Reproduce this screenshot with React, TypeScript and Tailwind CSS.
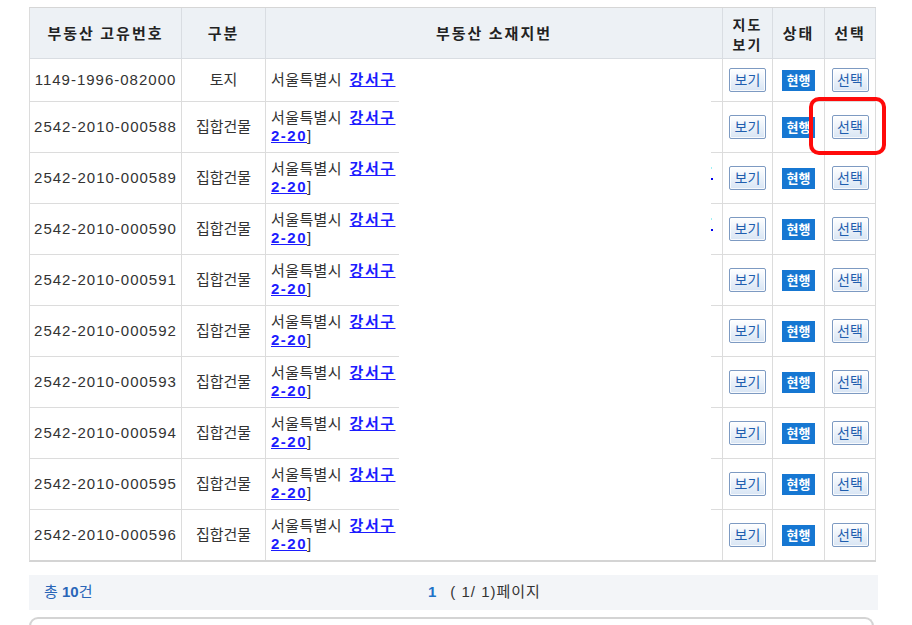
import React from 'react'

const rows = [
    { id: '1149-1996-082000', kind: '토지', single: true },
    { id: '2542-2010-000588', kind: '집합건물' },
    { id: '2542-2010-000589', kind: '집합건물', dots: true },
    { id: '2542-2010-000590', kind: '집합건물', dots: true },
    { id: '2542-2010-000591', kind: '집합건물' },
    { id: '2542-2010-000592', kind: '집합건물' },
    { id: '2542-2010-000593', kind: '집합건물' },
    { id: '2542-2010-000594', kind: '집합건물' },
    { id: '2542-2010-000595', kind: '집합건물' },
    { id: '2542-2010-000596', kind: '집합건물' },
]

const dotBg = 'bg-[radial-gradient(#dde2e8_0.6px,transparent_0.7px)] bg-[length:4px_4px]'

const SmallButton = ({ label }: { label: string }) => (
    <button className="w-[37px] h-[24px] rounded-[2px] border border-[#7d9ac2] bg-linear-to-b from-white to-[#d8e5f4] text-[14px] leading-none text-[#1f5eae] shadow-[inset_0_0_0_1px_rgba(255,255,255,0.8)]">
        {label}
    </button>
)

const Badge = () => (
    <span className="flex w-[33px] h-[21px] items-center justify-center bg-[#1677d2] text-[13px] font-bold leading-none text-white">
        현행
    </span>
)

const App = () => {
    return (
        <div className="relative min-h-[625px] overflow-hidden bg-white font-['Liberation_Sans','Noto_Sans_CJK_KR',sans-serif] text-[#333]">
            <div className="ml-[29px] pt-[7px] w-[847px]">
                <div className="border-t border-l border-b-2 border-t-[#d6d6d6] border-l-[#dcdcdc] border-b-[#d4d4d4]">
                    <div className={`grid grid-cols-[152px_84px_457px_50px_52px_51px] h-[51px] bg-[#edf1f5] ${dotBg} text-[15px] font-bold tracking-[2px] text-[#222] font-['Noto_Sans_CJK_KR',sans-serif]`}>
                        <div className="flex items-center justify-center border-r border-b border-[#d9dde2]">부동산 고유번호</div>
                        <div className="flex items-center justify-center border-r border-b border-[#d9dde2]">구분</div>
                        <div className="flex items-center justify-center border-r border-b border-[#d9dde2]">부동산 소재지번</div>
                        <div className="flex items-center justify-center border-r border-b border-[#d9dde2] pt-[1px] text-center text-[14px] leading-[20px] tracking-[2px]">
                            <span>지도<br />보기</span>
                        </div>
                        <div className="flex items-center justify-center border-r border-b border-[#d9dde2]">상태</div>
                        <div className="flex items-center justify-center border-r border-b border-[#d9dde2]">선택</div>
                    </div>

                    {rows.map((row, i) => {
                        const last = i === rows.length - 1
                        const b = last ? '' : 'border-b'
                        return (
                            <div
                                key={row.id}
                                className={`grid grid-cols-[152px_84px_457px_50px_52px_51px] text-[15px] ${row.single ? 'h-[43px]' : last ? 'h-[50px]' : 'h-[51px]'}`}
                            >
                                <div className={`flex items-center justify-center border-r ${b} border-[#dcdcdc] tracking-[1px]`}>{row.id}</div>
                                <div className={`flex items-center justify-center border-r ${b} border-[#dcdcdc]`}>{row.kind}</div>
                                <div className="flex border-r border-[#dcdcdc]">
                                    <div className={`flex w-[133px] flex-col justify-center overflow-hidden whitespace-nowrap pl-[5px] leading-[18px] tracking-[0.4px] ${b} border-[#dcdcdc]`}>
                                        <span>
                                            서울특별시{' '}
                                            <a href="#" className="ml-[3px] font-bold tracking-[1.5px] text-[#1c1cff] underline">강서구</a>
                                        </span>
                                        {!row.single && (
                                            <span>
                                                <a href="#" className="font-bold tracking-[1.5px] text-[#1c1cff] underline">2-20</a>]
                                            </span>
                                        )}
                                    </div>
                                    <div className="flex-1" />
                                    <div className={`flex w-[11px] flex-col ${b} border-[#dcdcdc]`}>
                                        {row.dots && (
                                            <>
                                                <span className="mt-[14px] block h-[2px] w-[1px] bg-[#9ef0f5]" />
                                                <span className="mt-[9px] block h-[2px] w-[2px] bg-[#0000ee]" />
                                            </>
                                        )}
                                    </div>
                                </div>
                                <div className={`flex items-center justify-center border-r ${b} border-[#dcdcdc]`}>
                                    <SmallButton label="보기" />
                                </div>
                                <div className={`flex items-center justify-center border-r ${b} border-[#dcdcdc]`}>
                                    <Badge />
                                </div>
                                <div className={`flex items-center justify-center border-r ${b} border-[#dcdcdc]`}>
                                    <SmallButton label="선택" />
                                </div>
                            </div>
                        )
                    })}
                </div>
            </div>

            <div className={`mt-[13px] ml-[29px] flex h-[35px] w-[849px] items-center bg-[#f3f5f8] ${dotBg} pl-[15px] text-[15px]`}>
                <span className="w-[384px] text-[#2a66b8]">
                    총 <b>10</b>건
                </span>
                <span className="font-bold text-[#1f72c8]">1</span>
                <span className="ml-[14px] tracking-[1px] text-[#333]">( 1/ 1)페이지</span>
            </div>

            <div className="mt-[7px] ml-[29px] h-[30px] w-[845px] rounded-t-[9px] border-2 border-b-0 border-[#d4d4d4]" />

            <div className="absolute left-[809px] top-[97px] h-[58px] w-[77px] rounded-[10px] border-4 border-[#ff0a0a]" />
        </div>
    )
}

export default App
